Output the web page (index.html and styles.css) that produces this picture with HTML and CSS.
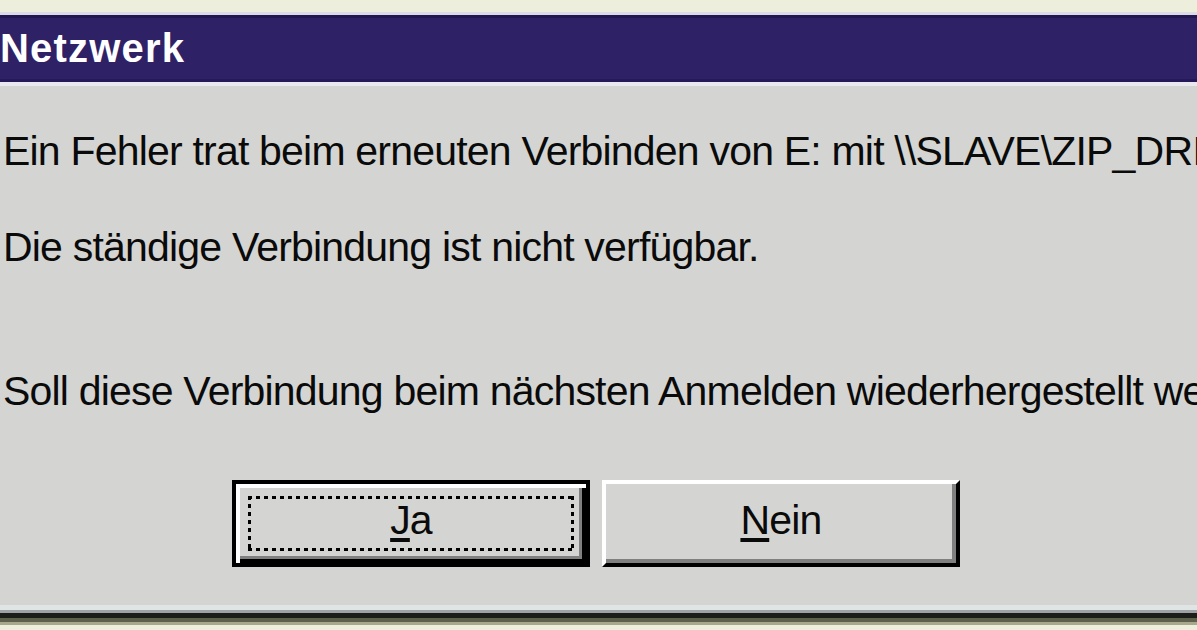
FILE: index.html
```html
<!DOCTYPE html>
<html>
<head>
  <link rel="stylesheet" href="styles.css">
</head>
<body>
  <div class="dialog">
    <div class="titlebar">Netzwerk</div>
    <div class="content">
      <p class="msg first">Ein Fehler trat beim erneuten Verbinden von E: mit \\SLAVE\ZIP_DRIVE auf:</p>
      <p class="msg second">Die ständige Verbindung ist nicht verfügbar.</p>
      <p class="msg third">Soll diese Verbindung beim nächsten Anmelden wiederhergestellt werden?</p>

      <div class="buttons">
        <button type="button" class="btn default"><span class="focus"><u>J</u>a</span></button>
        <button type="button" class="btn"><span class="focus"><u>N</u>ein</span></button>
      </div>
    </div>
    <div class="edge"></div>
  </div>
  <div class="ground"></div>
</body>
</html>
```

FILE: styles.css
```css
body {
  margin: 0;
  background-color: #eeeedc;
  font-family: "Liberation Sans", Arial, sans-serif;
  overflow: hidden;
}
.dialog {
  margin-top: 12px;
  border-top: 3px solid #dcdce8;
  background-color: #d4d5d2;
}
.titlebar {
  height: 67px;
  display: flex;
  align-items: center;
  padding-left: 0;
  background-color: #2f2166;
  box-shadow: inset 0 3px 0 #23174f, inset 0 -3px 0 #26195a;
  color: #ffffff;
  font-weight: bold;
  font-size: 40px;
  letter-spacing: 1.2px;
  border-bottom: 4px solid #e8e8ee;
}
.content {
  padding: 45px 0 38px 3px;
  border-bottom: 5px solid #dfe4e5;
}
.edge {
  height: 8px;
  background: linear-gradient(#9ea2a4 0 3px, #1b1d19 3px 8px);
}
.ground {
  height: 7px;
  background: linear-gradient(#5d604a 0 4px, #a8a88c 4px 7px);
}
.msg {
  margin: 0;
  font-size: 41px;
  line-height: 41px;
  letter-spacing: -0.8px;
  color: #0a0a0a;
  white-space: nowrap;
}
.msg.second {
  margin-top: 55px;
}
.msg.third {
  margin-top: 103px;
}
.buttons {
  display: flex;
  gap: 12px;
  margin-top: 68px;
  padding-left: 229px;
}
.btn {
  width: 358px;
  height: 87px;
  padding: 12px;
  display: flex;
  background-color: #d4d5d2;
  border: 4px solid;
  border-color: #ffffff #000000 #000000 #ffffff;
  box-shadow: inset -4px -4px 0 #808080;
  font-family: "Liberation Sans", Arial, sans-serif;
  font-size: 41px;
  color: #0a0a0a;
  cursor: pointer;
}
.btn.default {
  border-color: #000000;
  box-shadow: inset 4px 4px 0 #ffffff, inset -4px -4px 0 #000000, inset -7px -7px 0 #808080;
}
.focus {
  flex: 1;
  display: flex;
  align-items: center;
  justify-content: center;
  padding-bottom: 7px;
  line-height: 41px;
  letter-spacing: -0.8px;
}
/* dotted focus rectangle, drawn as square dots like the old GDI one */
.btn.default .focus {
  background:
    repeating-linear-gradient(90deg, #000 0 4px, transparent 4px 8px) top left / 100% 3px no-repeat,
    repeating-linear-gradient(90deg, #000 0 4px, transparent 4px 8px) bottom left / 100% 3px no-repeat,
    repeating-linear-gradient(180deg, #000 0 4px, transparent 4px 8px) top left / 3px 100% no-repeat,
    repeating-linear-gradient(180deg, #000 0 4px, transparent 4px 8px) top right / 3px 100% no-repeat;
}
.focus u {
  text-decoration-thickness: 4px;
  text-underline-offset: 4px;
}
```
